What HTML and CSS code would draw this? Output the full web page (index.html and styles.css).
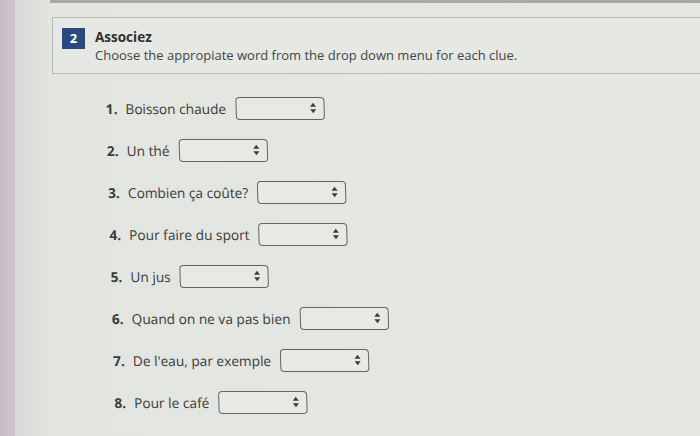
FILE: index.html
```html
<!DOCTYPE html>
<html lang="fr">
<head>
<meta charset="utf-8">
<title>Associez</title>
<link rel="stylesheet" href="styles.css">
</head>
<body>
<div class="edge"></div>
<main class="page">
  <div class="topbar"></div>
  <section class="panel">
    <span class="badge">2</span>
    <div class="heading">
      <div class="title">Associez</div>
      <div class="subtitle">Choose the appropiate word from the drop down menu for each clue.</div>
    </div>
  </section>
  <ol class="list">
    <li class="row"><span class="num">1.</span><span class="clue">Boisson chaude</span><span class="select"><svg class="arrows" viewBox="0 0 6 10"><path d="M3 0.5 L5.6 4 H0.4 Z M3 9.5 L5.6 6 H0.4 Z"/></svg></span></li>
    <li class="row"><span class="num">2.</span><span class="clue">Un thé</span><span class="select"><svg class="arrows" viewBox="0 0 6 10"><path d="M3 0.5 L5.6 4 H0.4 Z M3 9.5 L5.6 6 H0.4 Z"/></svg></span></li>
    <li class="row"><span class="num">3.</span><span class="clue">Combien ça coûte?</span><span class="select"><svg class="arrows" viewBox="0 0 6 10"><path d="M3 0.5 L5.6 4 H0.4 Z M3 9.5 L5.6 6 H0.4 Z"/></svg></span></li>
    <li class="row"><span class="num">4.</span><span class="clue">Pour faire du sport</span><span class="select"><svg class="arrows" viewBox="0 0 6 10"><path d="M3 0.5 L5.6 4 H0.4 Z M3 9.5 L5.6 6 H0.4 Z"/></svg></span></li>
    <li class="row"><span class="num">5.</span><span class="clue">Un jus</span><span class="select"><svg class="arrows" viewBox="0 0 6 10"><path d="M3 0.5 L5.6 4 H0.4 Z M3 9.5 L5.6 6 H0.4 Z"/></svg></span></li>
    <li class="row"><span class="num">6.</span><span class="clue">Quand on ne va pas bien</span><span class="select"><svg class="arrows" viewBox="0 0 6 10"><path d="M3 0.5 L5.6 4 H0.4 Z M3 9.5 L5.6 6 H0.4 Z"/></svg></span></li>
    <li class="row"><span class="num">7.</span><span class="clue">De l'eau, par exemple</span><span class="select"><svg class="arrows" viewBox="0 0 6 10"><path d="M3 0.5 L5.6 4 H0.4 Z M3 9.5 L5.6 6 H0.4 Z"/></svg></span></li>
    <li class="row"><span class="num">8.</span><span class="clue">Pour le café</span><span class="select"><svg class="arrows" viewBox="0 0 6 10"><path d="M3 0.5 L5.6 4 H0.4 Z M3 9.5 L5.6 6 H0.4 Z"/></svg></span></li>
  </ol>
</main>
</body>
</html>
```
FILE: styles.css
```css
html, body {
  margin: 0;
  height: 100%;
}
body {
  display: flex;
  background: #e3e5e0;
  font-family: "Open Sans", "Liberation Sans", sans-serif;
  color: #3a3b3a;
  overflow: hidden;
}
.edge {
  width: 15px;
  flex: none;
  background: linear-gradient(90deg, #c6bcc6, #cdc5cc);
}
.page {
  flex: 1;
  min-width: 0;
  display: flex;
  flex-direction: column;
  background: linear-gradient(90deg, #d9dad8 0px, #e3e5e0 35px, #e5e7e2 100%);
}
.topbar {
  height: 3px;
  margin-left: 35px;
  background: #a9aaa7;
}
.panel {
  margin: 14px -20px 0 37px;
  border: 1px solid #b9bbb6;
  background: #e6e8e4;
  display: flex;
  align-items: flex-start;
  gap: 10px;
  padding: 10px 0 0 9px;
  box-sizing: border-box;
  height: 57px;
}
.badge {
  flex: none;
  width: 23px;
  height: 21px;
  background: #284a80;
  color: #fff;
  font-weight: 700;
  font-size: 13px;
  line-height: 21px;
  text-align: center;
}
.heading {
  line-height: 18px;
  font-size: 13px;
}
.title {
  font-weight: 700;
  font-size: 13.5px;
  color: #2f3030;
}
.subtitle {
  color: #444;
}
.list {
  list-style: none;
  margin: 13px 0 0 0;
  padding: 0 0 0 90px;
  display: flex;
  flex-direction: column;
  transform: skewX(1.7deg);
  transform-origin: 0 0;
  font-size: 13.7px;
}
.row {
  height: 42px;
  display: flex;
  align-items: center;
}
.num {
  font-weight: 700;
  margin-right: 8px;
}
.clue {
  margin-right: 9px;
}
.select {
  width: 89px;
  height: 23px;
  box-sizing: border-box;
  border: 1px solid #626462;
  border-radius: 4px;
  background: #e7e9e4;
  display: flex;
  align-items: center;
  justify-content: flex-end;
  padding-right: 7px;
}
.arrows {
  width: 7px;
  height: 12px;
  fill: #3d3e3d;
}
```
